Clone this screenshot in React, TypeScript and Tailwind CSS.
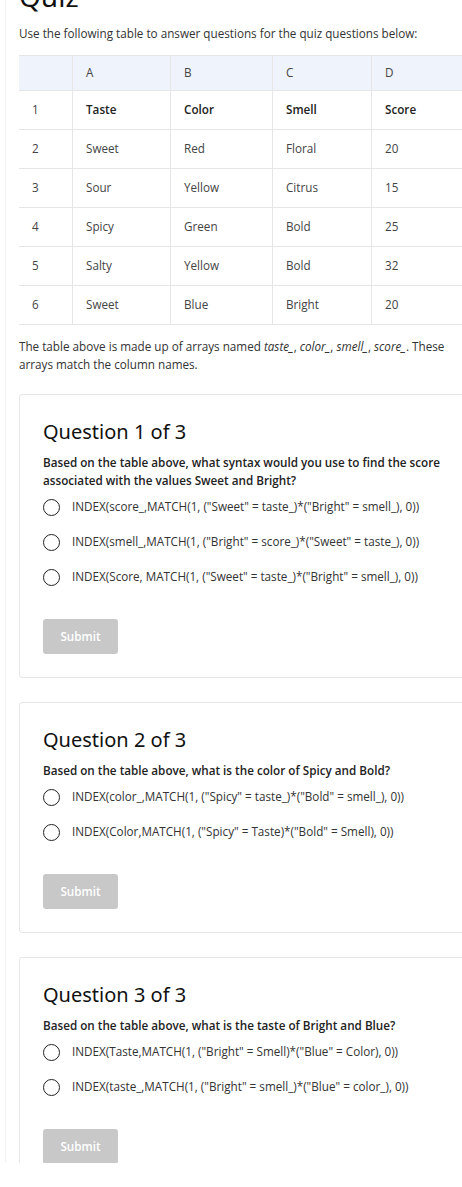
import React from "react";

const rows = [
  ["2", "Sweet", "Red", "Floral", "20"],
  ["3", "Sour", "Yellow", "Citrus", "15"],
  ["4", "Spicy", "Green", "Bold", "25"],
  ["5", "Salty", "Yellow", "Bold", "32"],
  ["6", "Sweet", "Blue", "Bright", "20"],
];

const colW = ["w-[53px]", "w-[98px]", "w-[102px]", "w-[99px]", "w-[120px]"];

function Row({ cells, bold, head }: { cells: string[]; bold?: boolean; head?: boolean }) {
  return (
    <div className={`flex ${head ? "h-[35px] bg-[#eef3fc]" : "h-[39px]"} border-b border-[#e6e6e6]`}>
      {cells.map((c, i) => (
        <div
          key={i}
          className={`${colW[i]} shrink-0 flex items-center pl-[13px] ${i > 0 ? "border-l border-[#e6e6e6]" : ""} ${
            bold && i > 0 ? "font-semibold text-[#222]" : "text-[#444]"
          }`}
        >
          {c}
        </div>
      ))}
    </div>
  );
}

function Radio() {
  return <span className="w-[17px] h-[17px] rounded-full border-[1.6px] border-[#222] shrink-0 inline-block" />;
}

function Card({
  n,
  q,
  opts,
  gapTop,
}: {
  n: number;
  q: React.ReactNode;
  opts: string[];
  gapTop: string;
}) {
  return (
    <div className={`${gapTop} border border-[#e6e6e6] rounded-[3px] pl-[23px] pt-[24px] pb-[23px] bg-white`}>
      <div className="text-[20px] leading-[26px] text-[#111]" style={{ fontFamily: '"Noto Sans", sans-serif' }}>
        Question {n} of 3
      </div>
      <div className="mt-[8px] text-[11.7px] leading-[18px] font-semibold text-[#222]">{q}</div>
      <div className="mt-[9px] flex flex-col gap-[17px]">
        {opts.map((o, i) => (
          <div key={i} className="flex items-center h-[18px]">
            <Radio />
            <span className="ml-[12px] text-[11.7px] text-[#333] whitespace-nowrap">{o}</span>
          </div>
        ))}
      </div>
      <button className="mt-[33px] w-[75px] h-[35px] rounded-[3px] bg-[#c8c8c8] text-white text-[11.7px] font-semibold">
        Submit
      </button>
    </div>
  );
}

export default function App() {
  return (
    <div className="w-[462px] h-[1187px] bg-white" style={{ fontFamily: '"Open Sans", "Noto Sans", sans-serif' }}>
      <div className="w-[462px] h-[1163px] overflow-hidden relative">
        <div className="absolute left-[5px] top-0 h-[1163px] w-px bg-[#f2f2f2]" />
        <div className="ml-[19px] w-[470px]">
          <div className="h-[20px] relative">
            <div
              className="absolute top-[-22px] left-0 text-[28px] leading-[36px] text-[#111]"
              style={{ fontFamily: '"Noto Sans", sans-serif' }}
            >
              Quiz
            </div>
          </div>
          <div className="text-[11.7px] leading-[18px] text-[#333] mt-[4px] whitespace-nowrap">
            Use the following table to answer questions for the quiz questions below:
          </div>
          <div className="mt-[13px] text-[11.7px] border-t border-[#e6e6e6]">
            <Row head cells={["", "A", "B", "C", "D"]} />
            <Row bold cells={["1", "Taste", "Color", "Smell", "Score"]} />
            {rows.map((r, i) => (
              <Row key={i} cells={r} />
            ))}
          </div>
          <p className="mt-[12px] text-[11.7px] leading-[18px] text-[#333] w-[436px]">
            The table above is made up of arrays named <i>taste_</i>, <i>color_</i>, <i>smell_</i>, <i>score_</i>. These
            arrays match the column names.
          </p>
          <Card
            gapTop="mt-[21px]"
            n={1}
            q={
              <>
                Based on the table above, what syntax would you use to find the score
                <br />
                associated with the values Sweet and Bright?
              </>
            }
            opts={[
              'INDEX(score_,MATCH(1, ("Sweet" = taste_)*("Bright" = smell_), 0))',
              'INDEX(smell_,MATCH(1, ("Bright" = score_)*("Sweet" = taste_), 0))',
              'INDEX(Score, MATCH(1, ("Sweet" = taste_)*("Bright" = smell_), 0))',
            ]}
          />
          <Card
            gapTop="mt-[24px]"
            n={2}
            q="Based on the table above, what is the color of Spicy and Bold?"
            opts={[
              'INDEX(color_,MATCH(1, ("Spicy" = taste_)*("Bold" = smell_), 0))',
              'INDEX(Color,MATCH(1, ("Spicy" = Taste)*("Bold" = Smell), 0))',
            ]}
          />
          <Card
            gapTop="mt-[24px]"
            n={3}
            q="Based on the table above, what is the taste of Bright and Blue?"
            opts={[
              'INDEX(Taste,MATCH(1, ("Bright" = Smell)*("Blue" = Color), 0))',
              'INDEX(taste_,MATCH(1, ("Bright" = smell_)*("Blue" = color_), 0))',
            ]}
          />
        </div>
      </div>
    </div>
  );
}
